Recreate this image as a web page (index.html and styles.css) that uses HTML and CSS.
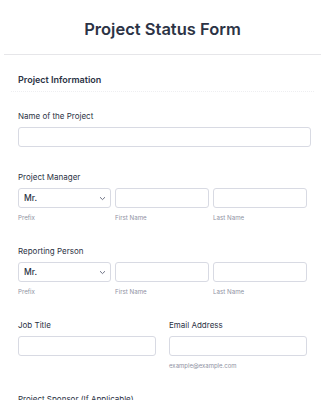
FILE: index.html
```html
<!DOCTYPE html>
<html lang="en">
<head>
    <meta charset="UTF-8">
    <meta name="viewport" content="width=device-width, initial-scale=1.0">
    <title>Project Status Form</title>
    <link rel="stylesheet" href="styles.css">
</head>
<body>

    <div class="form-header">
        <h1>Project Status Form</h1>
    </div>

    <div class="section-head">Project Information</div>

    <div class="field plain">
        <label class="label">Name of the Project</label>
        <input type="text" class="input full">
    </div>

    <div class="field">
        <label class="label">Project Manager</label>
        <div class="row three">
            <div class="col">
                <div class="select">
                    <span>Mr.</span>
                    <svg width="7" height="5" viewBox="0 0 7 5"><path d="M1 1.2 L3.5 3.6 L6 1.2" fill="none" stroke="#6f7385" stroke-width="1"/></svg>
                </div>
                <div class="sublabel">Prefix</div>
            </div>
            <div class="col">
                <input type="text" class="input">
                <div class="sublabel">First Name</div>
            </div>
            <div class="col">
                <input type="text" class="input">
                <div class="sublabel">Last Name</div>
            </div>
        </div>
    </div>

    <div class="field">
        <label class="label">Reporting Person</label>
        <div class="row three">
            <div class="col">
                <div class="select">
                    <span>Mr.</span>
                    <svg width="7" height="5" viewBox="0 0 7 5"><path d="M1 1.2 L3.5 3.6 L6 1.2" fill="none" stroke="#6f7385" stroke-width="1"/></svg>
                </div>
                <div class="sublabel">Prefix</div>
            </div>
            <div class="col">
                <input type="text" class="input">
                <div class="sublabel">First Name</div>
            </div>
            <div class="col">
                <input type="text" class="input">
                <div class="sublabel">Last Name</div>
            </div>
        </div>
    </div>

    <div class="row two">
        <div class="field col">
            <label class="label">Job Title</label>
            <input type="text" class="input">
        </div>
        <div class="field col">
            <label class="label">Email Address</label>
            <input type="text" class="input">
            <div class="sublabel email">example@example.com</div>
        </div>
    </div>

    <div class="field last">
        <label class="label">Project Sponsor (If Applicable)</label>
    </div>

</body>
</html>
```

FILE: styles.css
```css
body {
    font-family: 'Inter', 'Liberation Sans', sans-serif;
    background-color: #FFFFFF;
    color: #2c3345;
    margin: 0;
}

.form-header {
    margin: 0 4px;
    height: 55px;
    border-bottom: 1px solid #e6e6e9;
    display: flex;
    justify-content: center;
    align-items: center;
    box-sizing: border-box;
    padding-top: 3px;
}

h1 {
    font-size: 16.5px;
    font-weight: 600;
    margin: 0;
}

.section-head {
    margin: 0 11px;
    padding: 19px 7px 5px;
    line-height: 12px;
    font-size: 9px;
    font-weight: 600;
    border-bottom: 1px dotted #eeeef1;
}

.field {
    padding: 17px 15px 21px 18px;
}

.field.plain {
    padding-bottom: 23px;
}

.field + .field,
.field + .row,
.row + .field {
    padding-top: 0;
}

.field.last {
    padding-bottom: 0;
}

.row.two .field {
    padding: 0;
}

.row.two {
    padding: 0 18px 21px 18px;
}

.label {
    display: block;
    font-size: 8px;
    font-weight: 400;
    line-height: 12px;
    padding-top: 1px;
    margin-bottom: 5px;
}

.input {
    display: block;
    width: 100%;
    height: 20px;
    box-sizing: border-box;
    border: 1px solid #d8dae3;
    border-radius: 3px;
    background: #fff;
    margin: 0;
    padding: 0 4px;
}

.input.full {
    width: 293px;
}

.row {
    display: flex;
    width: 289px;
}

.row.three {
    gap: 4px;
}

.row.two {
    gap: 13px;
}

.col {
    flex: 1;
    min-width: 0;
}

.row.three .col:first-child {
    flex: none;
    width: 93px;
}

.select {
    height: 20px;
    box-sizing: border-box;
    border: 1px solid #d8dae3;
    border-radius: 3px;
    display: flex;
    align-items: center;
    justify-content: space-between;
    padding: 0 4px 0 5px;
    font-size: 8.5px;
    font-weight: 500;
}

.sublabel {
    font-size: 6.2px;
    color: #8f92a3;
    line-height: 10px;
    margin-top: 5px;
}

.sublabel.email {
    font-size: 6px;
}
```
